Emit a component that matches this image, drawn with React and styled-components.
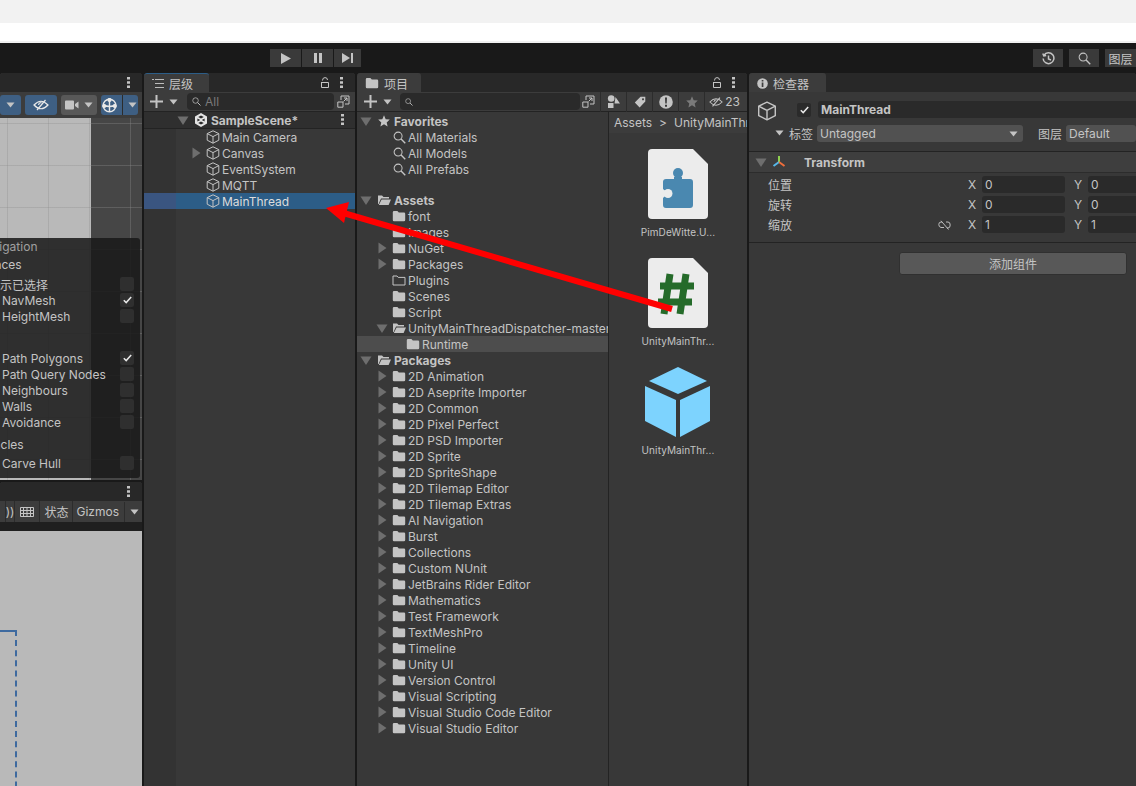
import React from 'react'
import styled, { createGlobalStyle } from 'styled-components'

const GlobalStyle = createGlobalStyle`
  html, body { margin: 0; padding: 0; background: #fff; overflow: hidden; }
  * { box-sizing: border-box; }
  body { font-family: Inter, "Noto Sans CJK SC", sans-serif; font-size: 12px; color: #c4c4c4; }
`

const Cube = ({ size = 14, color = '#c4c4c4' }) => (
  <svg width={size} height={size} viewBox="0 0 14 14" fill="none" stroke={color} strokeWidth="1" strokeLinejoin="round">
    <path d="M7 .8 12.8 3.6V10.2L7 13.2 1.2 10.2V3.6Z" />
    <path d="M1.2 3.6 7 6.6 12.8 3.6M7 6.6V13.2" />
  </svg>
)
const Folder = ({ open, outline }) => (
  <svg width="14" height="12" viewBox="0 0 14 12">
    {open ? (
      <path d="M1 1.5h4l1.5 1.5H12v1.5H4L1.6 10H1ZM4.6 5.5H14L11.6 11H1.8Z" fill="#c4c4c4" />
    ) : outline ? (
      <path d="M1 2h4l1.2 1.4H13V11H1Z" fill="none" stroke="#c4c4c4" />
    ) : (
      <path d="M.8 2.2Q.8 1 2 1h3.4l1.4 1.6H12Q13.2 2.6 13.2 3.8V10Q13.2 11.2 12 11.2H2Q.8 11.2 .8 10Z" fill="#c4c4c4" />
    )}
  </svg>
)
const Caret = ({ down, color = '#6e6e6e' }) => (
  <svg width="12" height="12" viewBox="0 0 12 12">
    <path d={down ? 'M.5 2.5H11.5L6 11Z' : 'M2.5 .5 10.5 6 2.5 11.5Z'} fill={color} />
  </svg>
)
const SmallCaret = ({ color = '#c4c4c4' }) => (
  <svg width="9" height="6" viewBox="0 0 9 6"><path d="M.5 .5H8.5L4.5 5.5Z" fill={color} /></svg>
)
const Kebab = () => (
  <svg width="3" height="11" viewBox="0 0 3 11"><path d="M0 0h3v2.4H0ZM0 4.3h3v2.4H0ZM0 8.6h3V11H0Z" fill="#c4c4c4" /></svg>
)
const Lock = () => (
  <svg width="10" height="11" viewBox="0 0 10 11" fill="none" stroke="#c4c4c4">
    <path d="M1.5 5V10.5H8.5V5.500H1.5M2.500 3.500Q2.500 .6 5 .6T7.500 3" />
  </svg>
)
const Glass = ({ size = 14 }) => (
  <svg width={size} height={size} viewBox="0 0 14 14" fill="none" stroke="#c4c4c4" strokeWidth="1.100">
    <circle cx="5.500" cy="5.500" r="4.300" /><path d="M8.700 8.700 13.200 13.200" strokeWidth="1.500" />
  </svg>
)
const Plus = () => (
  <svg width="13" height="13" viewBox="0 0 13 13"><path d="M5.500 0h2v5.500H13v2H7.500V13h-2V7.500H0v-2h5.500Z" fill="#c4c4c4" /></svg>
)
const ExpandBox = () => (
  <svg width="13" height="13" viewBox="0 0 13 13" fill="none" stroke="#c4c4c4">
    <path d="M4 5V1H12V9H8M.8 7H6V12.200H.8ZM6.500 6.500 10 3M7 3H10V6" />
  </svg>
)
const EyeOff = ({ color = '#c4c4c4', w = 16 }) => (
  <svg width={w} height="12" viewBox="0 0 16 12" fill="none" stroke={color} strokeWidth="1.200">
    <path d="M1 6Q8 -1.500 15 6 8 13.500 1 6Z" /><path d="M4 11 12.500 1" /><path d="M5.500 6Q6 3.500 8.500 3.500" />
  </svg>
)
const Camera = () => (
  <svg width="14" height="10" viewBox="0 0 14 10"><path d="M0 1.500Q0 .5 1 .5H8Q9 .5 9 1.500V8.500Q9 9.500 8 9.500H1Q0 9.500 0 8.500ZM10 4 13.500 1.500V8.500L10 6Z" fill="#c4c4c4" /></svg>
)
const GizmoGlobe = () => (
  <svg width="15" height="15" viewBox="0 0 15 15" fill="none" stroke="#e8e8e8" strokeWidth="1.400">
    <circle cx="7.500" cy="7.500" r="6.300" /><path d="M1.500 7Q7.500 10 13.500 7M7.500 1.200V13.800" />
    <circle cx="7.500" cy="2" r="1.400" fill="#e8e8e8" /><circle cx="2.200" cy="8" r="1.400" fill="#e8e8e8" /><circle cx="12.800" cy="8" r="1.400" fill="#e8e8e8" />
  </svg>
)
const UnityLogo = () => (
  <svg width="14" height="14" viewBox="0 0 14 14">
    <path d="M7 0 13 3.500V10.500L7 14 1 10.500V3.500Z" fill="#e4e4e4" />
    <path d="M7 5.600 4.200 4 7 2.500 9.800 4ZM6.200 7 3.400 5.400V8.600ZM7.800 7 10.600 5.400V8.600ZM7 8.400 9.800 10 7 11.500 4.200 10Z" fill="#2a2a2a" />
  </svg>
)
const Star = ({ color = '#c4c4c4', size = 12 }) => (
  <svg width={size} height={size} viewBox="0 0 12 12"><path d="M6 .3 7.700 4.200 11.800 4.600 8.700 7.400 9.600 11.500 6 9.300 2.400 11.500 3.300 7.400 .2 4.600 4.300 4.200Z" fill={color} /></svg>
)
const Shapes = () => (
  <svg width="13" height="13" viewBox="0 0 13 13" fill="#c4c4c4"><circle cx="4.200" cy="3.500" r="3.300" /><path d="M8.500 2 13 8.500H7.500ZM1 8h5.500v5H1Z" /></svg>
)
const Tag = () => (
  <svg width="12" height="12" viewBox="0 0 12 12"><path d="M6.500 .8H11.300V5.600L5.600 11.400 .8 6.500ZM9 2.200a1 1 0 1 0 .01 0Z" fill="#c4c4c4" fillRule="evenodd" /></svg>
)
const Alert = () => (
  <svg width="14" height="14" viewBox="0 0 14 14"><circle cx="7" cy="7" r="6.800" fill="#c4c4c4" /><path d="M6 2.500h2L7.700 8.500H6.300ZM6 9.800h2v2H6Z" fill="#383838" /></svg>
)
const InfoDot = () => (
  <svg width="11" height="11" viewBox="0 0 11 11"><circle cx="5.500" cy="5.500" r="5.300" fill="#c4c4c4" /><path d="M4.700 2h1.700v1.600H4.700ZM4.700 4.400h1.700V9H4.700Z" fill="#3c3c3c" /></svg>
)
const HierarchyGlyph = () => (
  <svg width="12" height="9" viewBox="0 0 12 9"><path d="M0 0h2v1H0ZM3 0h9v1H3ZM3 4h9v1H3ZM3 8h9v1H3Z" fill="#bdbdbd" /></svg>
)
const Check = () => (
  <svg width="9" height="8" viewBox="0 0 9 8" fill="none" stroke="#e8e8e8" strokeWidth="1.500"><path d="M.8 4.200 3.200 6.600 8.200 1" /></svg>
)
const History = () => (
  <svg width="13" height="13" viewBox="0 0 13 13" fill="none" stroke="#c4c4c4" strokeWidth="1.500">
    <path d="M2 3.200A5.400 5.400 0 1 1 1.100 6.500M.8 1.500 1.800 3.800 4.200 3.400M6.500 3.500V7L9 8" />
  </svg>
)
const Keyboard = () => (
  <svg width="14" height="10" viewBox="0 0 14 10" fill="none" stroke="#c4c4c4"><path d="M.5.500H13.500V9.500H.5ZM.5 3.500H13.500M.5 6.500H13.500M3.500 .5V9.500M7 .5V9.500M10.500 .5V9.500" /></svg>
)
const AxisGlyph = () => (
  <svg width="14" height="14" viewBox="0 0 14 14" strokeWidth="2" fill="none">
    <path d="M7 1V7" stroke="#8fd14f" /><path d="M7 7 1.500 11" stroke="#55b8ea" /><path d="M7 7 12.500 11" stroke="#ef6d3b" />
  </svg>
)
const LinkOff = () => (
  <svg width="13" height="10" viewBox="0 0 13 10" fill="none" stroke="#bdbdbd"><path d="M4 2H3Q.8 2 .8 4.500T3 7.500H6M8 2H10Q12.200 2 12.200 5T10 8H9M3 .8 10.500 9.500" /></svg>
)
const FileShape = ({ children }) => (
  <svg width="60" height="70" viewBox="0 0 60 70">
    <path d="M4 0H45L60 15V66Q60 70 56 70H4Q0 70 0 66V4Q0 0 4 0Z" fill="#ececec" />
    {children}
  </svg>
)
const AssetCube = () => (
  <svg width="66" height="70" viewBox="0 0 66 70">
    <path d="M33 0 62 14 33 27 4 14Z" fill="#7dd3fe" />
    <path d="M0 19 31 33V70L0 54Z" fill="#7dd3fe" />
    <path d="M35 33 65 19V54L35 70Z" fill="#7dd3fe" />
  </svg>
)

const Page = styled.div`
  width: 1136px;
  height: 786px;
  display: flex;
  flex-direction: column;
  position: relative;
  overflow: hidden;
`
const BrowserBar = styled.div`
  height: 23px;
  background: #f2f2f2;
`
const WhiteBar = styled.div`
  height: 20px;
  background: #fff;
  border-bottom: 2px solid #f0f0f0;
`
const Editor = styled.div`
  flex: 1;
  background: #191919;
  display: flex;
  flex-direction: column;
  min-height: 0;
`
const TopBar = styled.div`
  height: 30px;
  flex: none;
  display: flex;
  align-items: flex-start;
  padding: 6px 0 0 270px;
`
const TopGroup = styled.div`
  display: flex;
  gap: 1px;
`
const TopRight = styled.div`
  margin-left: auto;
  display: flex;
  gap: 6px;
`
const TopButton = styled.div`
  width: ${p => p.$w}px;
  height: 18px;
  background: #3a3a3a;
  color: #c4c4c4;
  display: flex;
  align-items: center;
  justify-content: center;
  white-space: nowrap;
  overflow: hidden;
`
const Panels = styled.div`
  flex: 1;
  min-height: 0;
  display: grid;
  grid-template-columns: 142px 211px 390px 1fr;
  gap: 2px;
`
const LeftColumn = styled.div`
  display: flex;
  flex-direction: column;
  gap: 2px;
  min-height: 0;
`
const Panel = styled.section`
  background: #383838;
  display: flex;
  flex-direction: column;
  min-height: 0;
  min-width: 0;
  border-radius: 3px 3px 0 0;
  overflow: hidden;
  ${p => p.$grow ? 'flex: 1;' : ''}
  ${p => p.$h ? `height: ${p.$h}px; flex: none;` : ''}
`
const TabBar = styled.div`
  height: 19px;
  flex: none;
  background: #282828;
  display: flex;
  align-items: center;
  justify-content: space-between;
  padding-right: 12px;
`
const Tab = styled.div`
  width: ${p => p.$w}px;
  height: 19px;
  background: #3c3c3c;
  border-top: 1px solid ${p => p.$active ? '#2c5d87' : '#3c3c3c'};
  display: flex;
  align-items: center;
  gap: 5px;
  padding-left: ${p => p.$pad}px;
  border-radius: 3px 3px 0 0;
`
const TabActions = styled.div`
  display: flex;
  align-items: center;
  gap: 10px;
`
const ToolRow = styled.div`
  height: ${p => p.$h || 20}px;
  flex: none;
  background: #3c3c3c;
  border-bottom: 1px solid #232323;
  display: flex;
  align-items: center;
`
const SceneTools = styled(ToolRow)`
  justify-content: flex-end;
  gap: 4px;
  padding-right: 4px;
  border-bottom: 0;
`
const SplitButton = styled.div`
  height: 20px;
  width: ${p => p.$w}px;
  background: ${p => p.$blue ? '#3e5f83' : '#585858'};
  border-radius: 3px;
  display: flex;
  align-items: center;
  justify-content: center;
  gap: 5px;
  flex: none;
`
const SplitDivider = styled.div`
  width: 1px;
  height: 20px;
  background: #2c2c2c;
`
const SceneView = styled.div`
  flex: 1;
  min-height: 0;
  position: relative;
  overflow: hidden;
  background:
    linear-gradient(90deg, #b9b9b9 91px, transparent 91px),
    #464646;
`
const SceneGrid = styled.div`
  position: absolute;
  inset: 0;
  background-image:
    linear-gradient(#8f8f8f55 1px, transparent 1px),
    linear-gradient(90deg, #8f8f8f55 1px, transparent 1px);
  background-size: 41px 42px;
  background-position: 7px 5px;
`
const Overlay = styled.div`
  position: absolute;
  left: -40px;
  right: 2px;
  top: 120px;
  height: 240px;
  background: rgba(25, 25, 25, 0.86);
  border-radius: 3px;
  padding-top: 0;
`
const OverlayRow = styled.div`
  height: ${p => p.$h || 16}px;
  margin-top: ${p => p.$mt || 0}px;
  display: flex;
  align-items: center;
  justify-content: space-between;
  padding: 0 6px 0 ${p => p.$left}px;
  white-space: nowrap;
  color: ${p => p.$dim ? '#a0a0a0' : '#c4c4c4'};
`
const Box = styled.div`
  width: 14px;
  height: 14px;
  background: #2f2f2f;
  border-radius: 2px;
  display: flex;
  align-items: center;
  justify-content: center;
`
const GameTools = styled(ToolRow)`
  height: 21px;
  justify-content: flex-end;
  border-bottom: 0;
`
const GameCell = styled.div`
  height: 21px;
  display: flex;
  align-items: center;
  justify-content: center;
  gap: 5px;
  padding: 0 ${p => p.$pad ?? 4}px;
  border-left: 1px solid #2c2c2c;
`
const GameGap = styled.div`
  height: 9px;
  flex: none;
  background: #1f1f1f;
`
const GameView = styled.div`
  flex: 1;
  background: #b9b9b9;
  position: relative;
  overflow: hidden;
`
const CanvasBounds = styled.div`
  position: absolute;
  left: -100px;
  top: 99px;
  width: 117px;
  height: 400px;
  border-top: 2px solid #3e6a9f;
  border-right: 2px dashed #3e6a9f;
`
const SearchField = styled.div`
  height: 17px;
  background: #2a2a2a;
  border-radius: 4px;
  display: flex;
  align-items: center;
  gap: 4px;
  padding-left: 5px;
  color: #7a7a7a;
  flex: ${p => p.$flex || 'none'};
  width: ${p => p.$w ? `${p.$w}px` : 'auto'};
`
const AddGroup = styled.div`
  display: flex;
  align-items: center;
  gap: 6px;
  width: 43px;
  padding-left: ${p => p.$pad}px;
  flex: none;
`
const IconCell = styled.div`
  width: ${p => p.$w}px;
  height: 20px;
  display: flex;
  align-items: center;
  justify-content: center;
  gap: 2px;
  flex: none;
  border-left: 1px solid #2c2c2c;
`
const HierarchyBody = styled.div`
  flex: 1;
  background: linear-gradient(90deg, #333 32px, #383838 32px);
`
const SceneHeader = styled.div`
  height: 17px;
  background: #2f2f2f;
  border-bottom: 1px solid #232323;
  display: flex;
  align-items: center;
  padding: 0 11px 0 33px;
  gap: 3px;
  font-weight: 700;
`
const Row = styled.div`
  height: 16px;
  display: flex;
  align-items: center;
  gap: 2px;
  white-space: nowrap;
  padding-left: ${p => p.$pad}px;
  background: ${p => p.$selected ? 'linear-gradient(90deg, #3a5580 32px, #2c5d87 32px)' : p.$hover ? '#4d4d4d' : 'transparent'};
  color: ${p => p.$selected ? '#dcdcdc' : 'inherit'};
  font-weight: ${p => p.$bold ? 700 : 400};
  margin-top: ${p => p.$mt || 0}px;
`
const Arrow = styled.span`
  width: 14px;
  flex: none;
  display: flex;
  align-items: center;
`
const IconSlot = styled.span`
  width: ${p => p.$w || 14}px;
  flex: none;
  display: flex;
  align-items: center;
  justify-content: center;
`
const ProjectBody = styled.div`
  flex: 1;
  display: grid;
  grid-template-columns: 252px 1fr;
  min-height: 0;
`
const Tree = styled.div`
  border-right: 1px solid #232323;
  padding-top: 1px;
  overflow: hidden;
`
const AssetPane = styled.div`
  min-width: 0;
  overflow: hidden;
`
const Breadcrumb = styled.div`
  height: 21px;
  background: #3c3c3c;
  display: flex;
  align-items: center;
  gap: 4px;
  padding-left: 5px;
  white-space: nowrap;
  overflow: hidden;
`
const AssetList = styled.div`
  padding-top: 16px;
  display: flex;
  flex-direction: column;
  align-items: center;
`
const Asset = styled.div`
  height: 109px;
  width: 90px;
  display: flex;
  flex-direction: column;
  align-items: center;
  font-size: 10px;
  letter-spacing: 0.1px;
`
const AssetIcon = styled.div`
  height: 70px;
  margin-bottom: 7px;
`
const InspectorHead = styled.div`
  height: 60px;
  flex: none;
  border-bottom: 1px solid #232323;
  display: grid;
  grid-template-columns: 40px 1fr;
  padding: 9px 0 0 8px;
`
const BigIcon = styled.div`
  position: relative;
  height: 30px;
`
const IconCaret = styled.span`
  position: absolute;
  left: 18px;
  top: 23px;
`
const HeadRows = styled.div`
  display: flex;
  flex-direction: column;
  gap: 7px;
`
const NameRow = styled.div`
  display: flex;
  align-items: center;
  gap: 7px;
`
const CheckBox = styled(Box)`
  background: #2a2a2a;
`
const NameField = styled.div`
  flex: 1;
  height: 17px;
  background: #2a2a2a;
  border-radius: 3px 0 0 3px;
  padding-left: 3px;
  font-weight: 700;
  display: flex;
  align-items: center;
`
const TagRow = styled.div`
  display: flex;
  align-items: center;
  margin-left: -8px;
  height: 17px;
`
const TagLabel = styled.span`
  width: ${p => p.$w}px;
  flex: none;
`
const Select = styled.div`
  width: ${p => p.$w ? `${p.$w}px` : 'auto'};
  flex: ${p => p.$w ? 'none' : 1};
  height: 17px;
  background: #515151;
  border-radius: 3px;
  display: flex;
  align-items: center;
  justify-content: space-between;
  padding: 0 5px 0 3px;
`
const ComponentHead = styled.div`
  height: 21px;
  flex: none;
  background: #3e3e3e;
  border-bottom: 1px solid #2c2c2c;
  display: flex;
  align-items: center;
  padding-left: 6px;
  font-weight: 700;
`
const ComponentTitle = styled.span`
  margin-left: 18px;
`
const Fields = styled.div`
  padding: 3px 0 9px;
  border-bottom: 1px solid #232323;
  display: flex;
  flex-direction: column;
  gap: 3px;
`
const FieldRow = styled.div`
  height: 17px;
  display: flex;
  align-items: center;
  padding-left: 19px;
`
const FieldName = styled.span`
  width: 170px;
  flex: none;
`
const LinkSlot = styled.span`
  width: 30px;
  flex: none;
  display: flex;
`
const Axis = styled.span`
  width: 14px;
  flex: none;
`
const NumberField = styled.div`
  height: 17px;
  width: ${p => p.$w}px;
  flex: none;
  background: #2a2a2a;
  border-radius: 3px;
  padding-left: 3px;
  display: flex;
  align-items: center;
  margin-right: ${p => p.$mr || 0}px;
`
const AddComponentWrap = styled.div`
  display: flex;
  padding: 9px 9px 0 150px;
`
const AddComponent = styled.div`
  flex: 1;
  height: 23px;
  background: #585858;
  border: 1px solid #303030;
  border-radius: 3px;
  display: flex;
  align-items: center;
  justify-content: center;
`
const ArrowOverlay = styled.svg`
  position: absolute;
  inset: 0;
  pointer-events: none;
`

const overlayRows = [
  { label: 'Navigation', left: 17, dim: true, h: 16 },
  { label: 'Surfaces', left: 11, h: 18, mt: 1 },
  { label: '仅显示已选择', left: 16, box: true, mt: 3 },
  { label: 'Show NavMesh', left: 7, box: true, on: true },
  { label: 'Show HeightMesh', left: 7, box: true },
  { label: '', h: 26 },
  { label: 'Show Path Polygons', left: 7, box: true, on: true },
  { label: 'Show Path Query Nodes', left: 7, box: true },
  { label: 'Show Neighbours', left: 7, box: true },
  { label: 'Show Walls', left: 7, box: true },
  { label: 'Show Avoidance', left: 7, box: true },
  { label: 'Obstacles', left: 7, mt: 6 },
  { label: 'Show Carve Hull', left: 7, box: true, mt: 3 },
]
const packages = ['2D Animation', '2D Aseprite Importer', '2D Common', '2D Pixel Perfect', '2D PSD Importer', '2D Sprite', '2D SpriteShape', '2D Tilemap Editor', '2D Tilemap Extras', 'AI Navigation', 'Burst', 'Collections', 'Custom NUnit', 'JetBrains Rider Editor', 'Mathematics', 'Test Framework', 'TextMeshPro', 'Timeline', 'Unity UI', 'Version Control', 'Visual Scripting', 'Visual Studio Code Editor', 'Visual Studio Editor']
const assetFolders = [
  { name: 'font' },
  { name: 'Images' },
  { name: 'NuGet', arrow: true },
  { name: 'Packages', arrow: true },
  { name: 'Plugins', outline: true },
  { name: 'Scenes' },
  { name: 'Script' },
]

function FolderRow({ name, arrow, outline }) {
  return (
    <Row $pad={19}>
      <Arrow>{arrow && <Caret />}</Arrow>
      <IconSlot><Folder outline={outline} /></IconSlot>
      <span>{name}</span>
    </Row>
  )
}

function SearchRow({ name }) {
  return (
    <Row $pad={19}>
      <Arrow />
      <IconSlot><Glass size={13} /></IconSlot>
      <span>{name}</span>
    </Row>
  )
}

function App() {
  return (
    <Page>
      <GlobalStyle />
      <BrowserBar />
      <WhiteBar />
      <Editor>
        <TopBar>
          <TopGroup>
            <TopButton $w={31}><svg width="10" height="11" viewBox="0 0 10 11"><path d="M0 0 10 5.500 0 11Z" fill="#c4c4c4" /></svg></TopButton>
            <TopButton $w={31}><svg width="8" height="10" viewBox="0 0 8 10"><path d="M0 0h3v10H0ZM5 0h3v10H5Z" fill="#c4c4c4" /></svg></TopButton>
            <TopButton $w={27}><svg width="11" height="10" viewBox="0 0 11 10"><path d="M0 0 8 5 0 10ZM9 0h2v10H9Z" fill="#c4c4c4" /></svg></TopButton>
          </TopGroup>
          <TopRight>
            <TopButton $w={30}><History /></TopButton>
            <TopButton $w={30}><Glass size={13} /></TopButton>
            <TopButton $w={31}>图层</TopButton>
          </TopRight>
        </TopBar>
        <Panels>
          <LeftColumn>
            <Panel $h={407}>
              <TabBar><span /><Kebab /></TabBar>
              <SceneTools $h={26}>
                <SplitButton $blue $w={21}><SmallCaret /></SplitButton>
                <SplitButton $blue $w={32}><EyeOff color="#e8e8e8" /></SplitButton>
                <SplitButton $w={36}><Camera /><SmallCaret /></SplitButton>
                <SplitButton $blue $w={37}><GizmoGlobe /><SplitDivider /><SmallCaret /></SplitButton>
              </SceneTools>
              <SceneView>
                <SceneGrid />
                <Overlay>
                  {overlayRows.map((r, i) => (
                    <OverlayRow key={i} $left={r.left} $dim={r.dim} $h={r.h} $mt={r.mt}>
                      <span>{r.label}</span>
                      {r.box && <Box>{r.on && <Check />}</Box>}
                    </OverlayRow>
                  ))}
                </Overlay>
              </SceneView>
            </Panel>
            <Panel $grow>
              <TabBar><span /><Kebab /></TabBar>
              <GameTools>
                <GameCell $pad={0}><span>))</span></GameCell>
                <GameCell $pad={5}><Keyboard /></GameCell>
                <GameCell>状态</GameCell>
                <GameCell $pad={3}>Gizmos<SplitDivider /><SmallCaret /></GameCell>
              </GameTools>
              <GameGap />
              <GameView><CanvasBounds /></GameView>
            </Panel>
          </LeftColumn>

          <Panel>
            <TabBar>
              <Tab $active $w={65} $pad={8}><HierarchyGlyph />层级</Tab>
              <TabActions><Lock /><Kebab /></TabActions>
            </TabBar>
            <ToolRow>
              <AddGroup $pad={6}><Plus /><SmallCaret /></AddGroup>
              <SearchField $w={147}><Glass size={9} />All</SearchField>
              <IconSlot $w={18}><ExpandBox /></IconSlot>
            </ToolRow>
            <HierarchyBody>
              <SceneHeader>
                <Arrow><Caret down /></Arrow>
                <UnityLogo />
                <span>SampleScene*</span>
                <span style={{ marginLeft: 'auto' }}><Kebab /></span>
              </SceneHeader>
              <Row $pad={46}><Arrow /><IconSlot><Cube /></IconSlot>Main Camera</Row>
              <Row $pad={46}><Arrow><Caret /></Arrow><IconSlot><Cube /></IconSlot>Canvas</Row>
              <Row $pad={46}><Arrow /><IconSlot><Cube /></IconSlot>EventSystem</Row>
              <Row $pad={46}><Arrow /><IconSlot><Cube /></IconSlot>MQTT</Row>
              <Row $pad={46} $selected><Arrow /><IconSlot><Cube /></IconSlot>MainThread</Row>
            </HierarchyBody>
          </Panel>

          <Panel>
            <TabBar>
              <Tab $w={64} $pad={8}><IconSlot><Folder /></IconSlot>项目</Tab>
              <TabActions><Lock /><Kebab /></TabActions>
            </TabBar>
            <ToolRow>
              <AddGroup $pad={7}><Plus /><SmallCaret /></AddGroup>
              <SearchField $w={180}><Glass size={8} /></SearchField>
              <IconSlot $w={17}><ExpandBox /></IconSlot>
              <span style={{ width: 3 }} />
              <IconCell $w={26}><Shapes /></IconCell>
              <IconCell $w={26}><Tag /></IconCell>
              <IconCell $w={26}><Alert /></IconCell>
              <IconCell $w={26}><Star color="#7a7a7a" /></IconCell>
              <IconCell $w={40}><EyeOff w={14} />23</IconCell>
            </ToolRow>
            <ProjectBody>
              <Tree>
                <Row $pad={3} $bold><Arrow><Caret down /></Arrow><IconSlot $w={16}><Star /></IconSlot>Favorites</Row>
                <SearchRow name="All Materials" />
                <SearchRow name="All Models" />
                <SearchRow name="All Prefabs" />
                <Row $pad={3} $bold $mt={15}><Arrow><Caret down /></Arrow><IconSlot $w={16}><Folder open /></IconSlot>Assets</Row>
                {assetFolders.map(f => <FolderRow key={f.name} {...f} />)}
                <Row $pad={19}><Arrow><Caret down /></Arrow><IconSlot><Folder open /></IconSlot>UnityMainThreadDispatcher-master</Row>
                <Row $pad={33} $hover><Arrow /><IconSlot><Folder /></IconSlot>Runtime</Row>
                <Row $pad={3} $bold><Arrow><Caret down /></Arrow><IconSlot $w={16}><Folder open /></IconSlot>Packages</Row>
                {packages.map(name => <FolderRow key={name} name={name} arrow />)}
              </Tree>
              <AssetPane>
                <Breadcrumb>Assets<span style={{ margin: '0 3px' }}>&gt;</span>UnityMainThreadDispatcher</Breadcrumb>
                <AssetList>
                  <Asset>
                    <AssetIcon>
                      <FileShape>
                        <circle cx="30" cy="24" r="5" fill="#4a88b0" />
                        <path d="M18 30Q15 30 15 33V40a5 5 0 0 1 0 9V56Q15 59 18 59H42Q45 59 45 56V33Q45 30 42 30H34V28H26V30Z" fill="#4a88b0" />
                        <circle cx="20" cy="44.500" r="4.500" fill="#ececec" />
                      </FileShape>
                    </AssetIcon>
                    <span>PimDeWitte.U...</span>
                  </Asset>
                  <Asset>
                    <AssetIcon>
                      <FileShape>
                        <path d="M22 16 16 56M38 16 32 56M12 28H46M10 44H44" stroke="#256b2a" strokeWidth="7" fill="none" />
                      </FileShape>
                    </AssetIcon>
                    <span>UnityMainThr...</span>
                  </Asset>
                  <Asset>
                    <AssetIcon><AssetCube /></AssetIcon>
                    <span>UnityMainThr...</span>
                  </Asset>
                </AssetList>
              </AssetPane>
            </ProjectBody>
          </Panel>

          <Panel>
            <TabBar>
              <Tab $w={77} $pad={8}><InfoDot />检查器</Tab>
            </TabBar>
            <InspectorHead>
              <BigIcon>
                <Cube size={20} />
                <IconCaret><SmallCaret /></IconCaret>
              </BigIcon>
              <HeadRows>
                <NameRow>
                  <CheckBox><Check /></CheckBox>
                  <NameField>MainThread</NameField>
                </NameRow>
                <TagRow>
                  <TagLabel $w={28}>标签</TagLabel>
                  <Select $w={206}>Untagged<SmallCaret /></Select>
                  <TagLabel $w={43} style={{ paddingLeft: 15 }}>图层</TagLabel>
                  <Select>Default</Select>
                </TagRow>
              </HeadRows>
            </InspectorHead>
            <ComponentHead>
              <Caret down />
              <span style={{ width: 5 }} />
              <AxisGlyph />
              <ComponentTitle>Transform</ComponentTitle>
            </ComponentHead>
            <Fields>
              {[['位置', '0'], ['旋转', '0'], ['缩放', '1']].map(([name, v], i) => (
                <FieldRow key={name}>
                  <FieldName>{name}</FieldName>
                  <LinkSlot>{i === 2 && <LinkOff />}</LinkSlot>
                  <Axis>X</Axis>
                  <NumberField $w={83} $mr={9}>{v}</NumberField>
                  <Axis>Y</Axis>
                  <NumberField $w={60}>{v}</NumberField>
                </FieldRow>
              ))}
            </Fields>
            <AddComponentWrap>
              <AddComponent>添加组件</AddComponent>
            </AddComponentWrap>
          </Panel>
        </Panels>
      </Editor>
      <ArrowOverlay width="1136" height="786" viewBox="0 0 1136 786">
        <path d="M672 309 340 212" stroke="#ff0000" strokeWidth="6" fill="none" />
        <path d="M326 208 349 202 344 223Z" fill="#ff0000" />
      </ArrowOverlay>
    </Page>
  )
}

export default App
